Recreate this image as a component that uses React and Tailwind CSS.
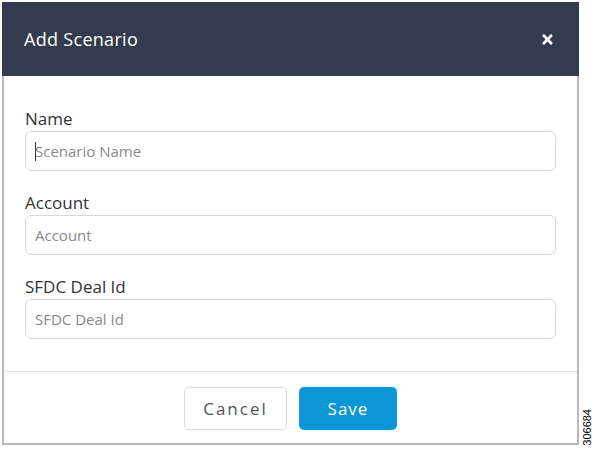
import { FaTimes } from 'react-icons/fa';

const fields = [
  { label: 'Name', placeholder: 'Scenario Name', caret: true },
  { label: 'Account', placeholder: 'Account' },
  { label: 'SFDC Deal Id', placeholder: 'SFDC Deal Id' },
];

function Field({ label, placeholder, caret }) {
  return (
    <div className="flex flex-col">
      <label className="h-6 text-[17px] leading-6 text-[#333]">{label}</label>
      <div className="relative">
        <input
          type="text"
          placeholder={placeholder}
          className="h-10 w-full rounded-md border border-[#d9d9d9] bg-white px-[9px] text-[15px] text-[#333] outline-none placeholder:text-[#8a8a8a]"
        />
        {caret && <span className="absolute left-[10px] top-[11px] h-[19px] w-px bg-[#333]" />}
      </div>
    </div>
  );
}

export default function App() {
  return (
    <div className="flex h-[451px] w-[596px] bg-white font-['Open_Sans',sans-serif]">
      <div className="ml-[2px] mt-[2px] flex h-[443px] w-[577px] flex-col">
        <div className="flex h-[74px] items-center justify-between bg-[#323c4d] pl-[22px] pr-[24px]">
          <h2 className="text-[18px] tracking-[0.3px] text-white">Add Scenario</h2>
          <FaTimes className="h-[15px] w-[15px] text-white" />
        </div>

        <div className="flex flex-1 flex-col border-x-2 border-b-2 border-[#b9b9b9]">
          <div className="flex flex-col gap-5 px-[21px] pt-[31px] pb-[32px]">
            {fields.map((f) => (
              <Field key={f.label} {...f} />
            ))}
          </div>

          <div className="flex flex-1 items-start justify-center gap-3 border-t border-[#dddddd] pt-[15px]">
            <button className="h-[43px] w-[103px] rounded-[5px] border border-[#dcdcdc] bg-white text-[17px] tracking-[2px] text-[#555]">
              Cancel
            </button>
            <button className="h-[43px] w-[98px] rounded-[5px] bg-[#0c96d6] text-[17px] tracking-[1px] text-white">
              Save
            </button>
          </div>
        </div>
      </div>

      <div className="flex flex-1 items-end justify-center pb-[5px]">
        <span className="rotate-180 font-['Liberation_Sans',sans-serif] text-[11px] leading-none text-black [writing-mode:vertical-rl]">
          306684
        </span>
      </div>
    </div>
  );
}
